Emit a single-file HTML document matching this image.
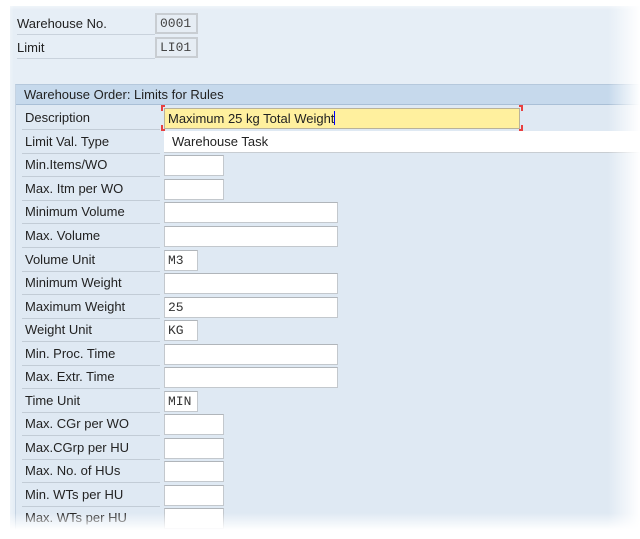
<!DOCTYPE html>
<html><head><meta charset="utf-8"><style>
*{margin:0;padding:0;box-sizing:border-box}
body{width:640px;height:539px;overflow:hidden;background:#fff;position:relative;font-family:"Liberation Sans",Tahoma,sans-serif;font-size:13px;color:#222}
#page{position:absolute;left:10px;top:6px;width:630px;height:524px;background:#e6eef6}
.hl{position:absolute;left:17px;width:138px;height:22px;line-height:21px;border-bottom:1px solid #c9d2dc}
.hv{position:absolute;left:155px;width:43px;height:21px;border:2px solid #c8cdd2;background:#e6edf4;font-family:"Liberation Mono",monospace;font-size:13px;line-height:17px;padding-left:3px;color:#444}
#grp{position:absolute;left:15px;top:84px;width:625px;height:446px;background:#dfe9f3;border-left:1px solid #c5d3e2;border-top:1px solid #b5c8dc}
#gt{position:absolute;left:0;top:0;width:100%;height:20px;background:#c6d9ec;border-bottom:1px solid #a9bfd6;line-height:19px;padding-left:8px;color:#222}
.l{position:absolute;left:22px;width:138px;height:23px;line-height:22px;padding-left:3px;border-bottom:1px solid #c2ccd6}
.i{position:absolute;left:164px;height:21px;background:#fff;border:1px solid #c3c8cd;border-top-color:#b0b5ba;font-family:"Liberation Mono",monospace;font-size:13px;line-height:19px;padding-left:3px;color:#333}
.fr{position:absolute;background:linear-gradient(to left,#fff,rgba(255,255,255,0))}
.c{position:absolute;width:4px;height:6px;border:0 solid #e84040}
</style></head><body>
<div id="page"></div>
<div class="hl" style="top:13px">Warehouse No.</div>
<div class="hv" style="top:13px">0001</div>
<div class="hl" style="top:37px">Limit</div>
<div class="hv" style="top:37px">LI01</div>
<div id="grp"><div id="gt">Warehouse Order: Limits for Rules</div></div>

<div class="l" style="top:107px">Description</div>
<div style="position:absolute;left:164px;top:108px;width:356px;height:21px;background:#fff09e;border:1px solid #b9b29a;padding-left:3px;line-height:19px">Maximum 25 kg Total Weight<span style="display:inline-block;width:1px;height:14px;background:#00f;vertical-align:-2px"></span></div>
<div class="c" style="left:161px;top:105px;border-left-width:2px;border-top-width:2px"></div>
<div class="c" style="left:161px;top:125px;border-left-width:2px;border-bottom-width:2px"></div>
<div class="c" style="left:519px;top:105px;border-right-width:2px;border-top-width:2px"></div>
<div class="c" style="left:519px;top:125px;border-right-width:2px;border-bottom-width:2px"></div>

<div class="l" style="top:131px">Limit Val. Type</div>
<div style="position:absolute;left:164px;top:131px;width:476px;height:22px;background:#fff;border-bottom:1px solid #c8cdd2;line-height:21px;padding-left:8px">Warehouse Task</div>

<div class="l" style="top:154px">Min.Items/WO</div><div class="i" style="top:155px;width:60px"></div>
<div class="l" style="top:178px">Max. Itm per WO</div><div class="i" style="top:179px;width:60px"></div>
<div class="l" style="top:201px">Minimum Volume</div><div class="i" style="top:202px;width:174px"></div>
<div class="l" style="top:225px">Max. Volume</div><div class="i" style="top:226px;width:174px"></div>
<div class="l" style="top:249px">Volume Unit</div><div class="i" style="top:250px;width:34px">M3</div>
<div class="l" style="top:272px">Minimum Weight</div><div class="i" style="top:273px;width:174px"></div>
<div class="l" style="top:296px">Maximum Weight</div><div class="i" style="top:297px;width:174px">25</div>
<div class="l" style="top:319px">Weight Unit</div><div class="i" style="top:320px;width:34px">KG</div>
<div class="l" style="top:343px">Min. Proc. Time</div><div class="i" style="top:344px;width:174px"></div>
<div class="l" style="top:366px">Max. Extr. Time</div><div class="i" style="top:367px;width:174px"></div>
<div class="l" style="top:390px">Time Unit</div><div class="i" style="top:391px;width:34px">MIN</div>
<div class="l" style="top:413px">Max. CGr per WO</div><div class="i" style="top:414px;width:60px"></div>
<div class="l" style="top:437px">Max.CGrp per HU</div><div class="i" style="top:438px;width:60px"></div>
<div class="l" style="top:460px">Max. No. of HUs</div><div class="i" style="top:461px;width:60px"></div>
<div class="l" style="top:484px">Min. WTs per HU</div><div class="i" style="top:485px;width:60px"></div>
<div class="l" style="top:507px">Max. WTs per HU</div><div class="i" style="top:508px;width:60px"></div>

<div class="fr" style="right:0;top:0;width:32px;height:539px"></div>
<div class="fr" style="left:0;right:0;bottom:0;height:26px;background:linear-gradient(to top,#fff 35%,rgba(255,255,255,0))"></div>
<div class="fr" style="left:0;right:0;top:0;height:10px;background:linear-gradient(to bottom,#fff,rgba(255,255,255,0))"></div>
<div class="fr" style="left:0;top:0;width:14px;height:539px;background:linear-gradient(to right,#fff,rgba(255,255,255,0))"></div>
</body></html>
